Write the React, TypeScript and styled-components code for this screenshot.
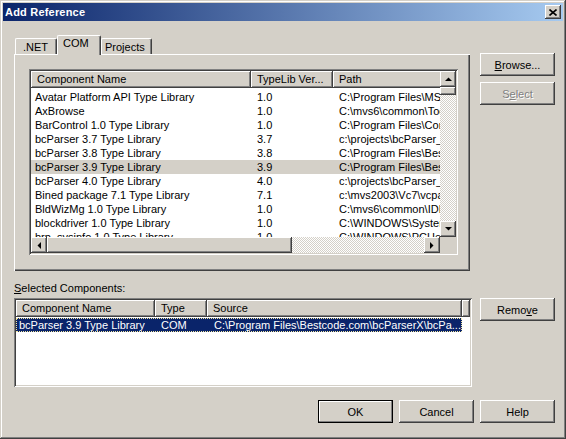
import React from "react";
import styled, { createGlobalStyle, css } from "styled-components";

const face = "#d4d0c8";
const light = "#ffffff";
const shadow = "#808080";
const dark = "#404040";

const GlobalStyle = createGlobalStyle`
  body {
    margin: 0;
    background: ${face};
  }
`;

const raised = css`
  box-shadow: inset -1px -1px ${dark}, inset 1px 1px ${light},
    inset -2px -2px ${shadow}, inset 2px 2px ${face};
`;

const sunken = css`
  box-shadow: inset 1px 1px ${shadow}, inset -1px -1px ${light},
    inset 2px 2px ${dark}, inset -2px -2px ${face};
`;

const checker = css`
  background: repeating-conic-gradient(${face} 0% 25%, ${light} 0% 50%) 0 0 / 2px 2px;
`;

const Window = styled.div`
  width: 566px;
  height: 439px;
  box-sizing: border-box;
  padding: 3px;
  background: ${face};
  box-shadow: inset -1px -1px ${dark}, inset 1px 1px ${face},
    inset -2px -2px ${shadow}, inset 2px 2px ${light};
  display: flex;
  flex-direction: column;
  font-family: "Liberation Sans", Arial, sans-serif;
  font-size: 11px;
  color: #000;
`;

const TitleBar = styled.div`
  height: 18px;
  display: flex;
  align-items: center;
  justify-content: space-between;
  padding: 0 2px;
  background: linear-gradient(to right, #0a246a, #a6caf0);
`;

const Title = styled.span`
  color: #fff;
  font-weight: bold;
  font-size: 11px;
  letter-spacing: 0.2px;
`;

const CloseButton = styled.div`
  width: 16px;
  height: 14px;
  background: ${face};
  ${raised};
  display: flex;
  align-items: center;
  justify-content: center;
`;

const Body = styled.div`
  flex: 1;
  display: flex;
  flex-direction: column;
  padding: 13px 8px 0 11px;
`;

const TopSection = styled.div`
  display: flex;
  gap: 10px;
`;

const TabArea = styled.div`
  width: 456px;
  display: flex;
  flex-direction: column;
`;

const TabStrip = styled.div`
  height: 20px;
  display: flex;
  align-items: flex-end;
  padding-left: 1px;
`;

const Tab = styled.div<{ $active?: boolean; $w: number; $pad: number }>`
  width: ${(p) => p.$w}px;
  height: ${(p) => (p.$active ? 20 : 16)}px;
  box-sizing: border-box;
  padding-left: ${(p) => p.$pad}px;
  padding-top: ${(p) => (p.$active ? 1 : 2)}px;
  line-height: 12px;
  background: ${face};
  border-top: 1px solid ${light};
  border-left: 1px solid ${light};
  border-right: 1px solid ${dark};
  border-radius: 2px 2px 0 0;
  box-shadow: inset -1px 0 ${shadow};
  position: relative;
  z-index: ${(p) => (p.$active ? 1 : 0)};
  margin-bottom: ${(p) => (p.$active ? -1 : 0)}px;
`;

const Panel = styled.div`
  height: 217px;
  box-sizing: border-box;
  padding: 15px 12px 16px 15px;
  box-shadow: inset 1px 1px ${light}, inset -1px -1px ${dark},
    inset -2px -2px ${shadow};
`;

const ButtonColumn = styled.div`
  display: flex;
  flex-direction: column;
  gap: 6px;
  padding-top: 19px;
`;

const Button = styled.button<{ $default?: boolean }>`
  width: 75px;
  height: 23px;
  padding: 0;
  border: none;
  background: ${face};
  font: inherit;
  color: ${(p) => (p.disabled ? shadow : "#000")};
  text-shadow: ${(p) => (p.disabled ? `1px 1px ${light}` : "none")};
  display: flex;
  align-items: center;
  justify-content: center;
  ${(p) =>
    p.$default
      ? css`
          box-shadow: inset 0 0 0 1px #000, inset -2px -2px ${shadow},
            inset 2px 2px ${light};
        `
      : raised};
`;

const ListView = styled.div<{ $w: number; $h: number }>`
  width: ${(p) => p.$w}px;
  height: ${(p) => p.$h}px;
  box-sizing: border-box;
  padding: 2px;
  background: #fff;
  ${sunken};
`;

const ScrollGrid = styled.div`
  width: 100%;
  height: 100%;
  display: grid;
  grid-template-columns: 1fr 16px;
  grid-template-rows: 1fr 16px;
`;

const Viewport = styled.div`
  overflow: hidden;
  min-width: 0;
`;

const HeaderRow = styled.div`
  display: flex;
  height: 17px;
  white-space: nowrap;
`;

const HeaderCell = styled.div<{ $w: number }>`
  flex: 0 0 ${(p) => p.$w}px;
  box-sizing: border-box;
  padding-left: 6px;
  line-height: 17px;
  background: ${face};
  overflow: hidden;
  ${raised};
`;

const Rows = styled.div<{ $top: number }>`
  padding-top: ${(p) => p.$top}px;
`;

const Row = styled.div<{ $sel?: "inactive" | "active" }>`
  display: flex;
  height: 14px;
  line-height: 14px;
  white-space: nowrap;
  width: max-content;
  background: ${(p) =>
    p.$sel === "active" ? "#0a246a" : p.$sel === "inactive" ? face : "transparent"};
  color: ${(p) => (p.$sel === "active" ? "#fff" : "#000")};
  outline: ${(p) => (p.$sel === "active" ? "1px dotted #f3e6a0" : "none")};
  outline-offset: -1px;
`;

const Cell = styled.div<{ $w: number; $pad: number }>`
  flex: 0 0 ${(p) => p.$w}px;
  box-sizing: border-box;
  padding-left: ${(p) => p.$pad}px;
  overflow: hidden;
`;

const VScroll = styled.div`
  display: flex;
  flex-direction: column;
`;

const HScroll = styled.div`
  display: flex;
`;

const ArrowButton = styled.div`
  flex: 0 0 16px;
  width: 16px;
  height: 16px;
  background: ${face};
  ${raised};
  display: flex;
  align-items: center;
  justify-content: center;
`;

const Thumb = styled.div<{ $size: number }>`
  flex: 0 0 ${(p) => p.$size}px;
  background: ${face};
  ${raised};
`;

const Trough = styled.div`
  flex: 1;
  ${checker};
`;

const Corner = styled.div`
  background: ${face};
`;

const SectionLabel = styled.div`
  margin-top: 10px;
  height: 14px;
  line-height: 14px;
`;

const SelectedRow = styled.div`
  display: flex;
  gap: 8px;
  margin-top: 3px;
`;

const BottomRow = styled.div`
  display: flex;
  justify-content: flex-end;
  gap: 6px;
  margin-top: 13px;
`;

type Dir = "up" | "down" | "left" | "right";

const Arrow = ({ dir }: { dir: Dir }) => {
  const pts: Record<Dir, string> = {
    up: "0,4 7,4 3.5,0.5",
    down: "0,0 7,0 3.5,3.5",
    left: "4,0 4,7 0.5,3.5",
    right: "0,0 0,7 3.5,3.5",
  };
  const vertical = dir === "up" || dir === "down";
  return (
    <svg width={vertical ? 7 : 4} height={vertical ? 4 : 7}>
      <polygon points={pts[dir]} fill="#000" />
    </svg>
  );
};

const comColumns = [
  { title: "Component Name", w: 220, pad: 4 },
  { title: "TypeLib Ver...", w: 82, pad: 6 },
  { title: "Path", w: 240, pad: 6 },
];

const comRows = [
  ["Avatar Platform API Type Library", "1.0", "C:\\Program Files\\MSN Messenger\\avatar.dll"],
  ["AxBrowse", "1.0", "C:\\mvs6\\common\\Tools\\axbrowse.tlb"],
  ["BarControl 1.0 Type Library", "1.0", "C:\\Program Files\\Common Files\\bar.ocx"],
  ["bcParser 3.7 Type Library", "3.7", "c:\\projects\\bcParser_37\\bcParser.dll"],
  ["bcParser 3.8 Type Library", "3.8", "C:\\Program Files\\Bestcode.com\\bcParser.dll"],
  ["bcParser 3.9 Type Library", "3.9", "C:\\Program Files\\Bestcode.com\\bcParserX.dll"],
  ["bcParser 4.0 Type Library", "4.0", "c:\\projects\\bcParser_40\\bcParser.dll"],
  ["Bined package 7.1 Type Library", "7.1", "c:\\mvs2003\\Vc7\\vcpackages\\bined.dll"],
  ["BldWizMg 1.0 Type Library", "1.0", "C:\\mvs6\\common\\IDE\\bldwizmg.dll"],
  ["blockdriver 1.0 Type Library", "1.0", "C:\\WINDOWS\\System32\\blockdriver.dll"],
  ["brp_sysinfo 1.0 Type Library", "1.0", "C:\\WINDOWS\\PCHealth\\brp_sysinfo.dll"],
];

const selColumns = [
  { title: "Component Name", w: 139, pad: 3 },
  { title: "Type", w: 52, pad: 6 },
  { title: "Source", w: 255, pad: 7 },
  { title: "", w: 8, pad: 0 },
];

const App = () => {
  return (
    <>
      <GlobalStyle />
      <Window>
        <TitleBar>
          <Title>Add Reference</Title>
          <CloseButton>
            <svg width="8" height="7" viewBox="0 0 8 7">
              <path d="M0.5 0.5L7.5 6.5M7.5 0.5L0.5 6.5" stroke="#000" strokeWidth="1.6" />
            </svg>
          </CloseButton>
        </TitleBar>
        <Body>
          <TopSection>
            <TabArea>
              <TabStrip>
                <Tab $w={42} $pad={7}>.NET</Tab>
                <Tab $w={44} $pad={5} $active>
                  COM
                </Tab>
                <Tab $w={51} $pad={3}>Projects</Tab>
              </TabStrip>
              <Panel>
                <ListView $w={429} $h={186}>
                  <ScrollGrid>
                    <Viewport>
                      <HeaderRow>
                        {comColumns.map((c) => (
                          <HeaderCell key={c.title} $w={c.w}>
                            {c.title}
                          </HeaderCell>
                        ))}
                      </HeaderRow>
                      <Rows $top={2}>
                        {comRows.map((r, i) => (
                          <Row key={r[0]} $sel={i === 5 ? "inactive" : undefined}>
                            {r.map((v, j) => (
                              <Cell key={j} $w={comColumns[j].w} $pad={comColumns[j].pad}>
                                {v}
                              </Cell>
                            ))}
                          </Row>
                        ))}
                      </Rows>
                    </Viewport>
                    <VScroll>
                      <ArrowButton>
                        <Arrow dir="up" />
                      </ArrowButton>
                      <Thumb $size={8} />
                      <Trough />
                      <ArrowButton>
                        <Arrow dir="down" />
                      </ArrowButton>
                    </VScroll>
                    <HScroll>
                      <ArrowButton>
                        <Arrow dir="left" />
                      </ArrowButton>
                      <Thumb $size={245} />
                      <Trough />
                      <ArrowButton>
                        <Arrow dir="right" />
                      </ArrowButton>
                    </HScroll>
                    <Corner />
                  </ScrollGrid>
                </ListView>
              </Panel>
            </TabArea>
            <ButtonColumn>
              <Button>
                <u>B</u>rowse...
              </Button>
              <Button disabled>
                S<u>e</u>lect
              </Button>
            </ButtonColumn>
          </TopSection>

          <SectionLabel>
            <u>S</u>elected Components:
          </SectionLabel>
          <SelectedRow>
            <ListView $w={458} $h={89}>
              <HeaderRow>
                {selColumns.map((c, i) => (
                  <HeaderCell key={i} $w={c.w}>
                    {c.title}
                  </HeaderCell>
                ))}
              </HeaderRow>
              <Rows $top={1}>
                <Row $sel="active">
                  <Cell $w={139} $pad={3}>bcParser 3.9 Type Library</Cell>
                  <Cell $w={52} $pad={6}>COM</Cell>
                  <Cell $w={255} $pad={7}>
                    C:\Program Files\Bestcode.com\bcParserX\bcPa...
                  </Cell>
                </Row>
              </Rows>
            </ListView>
            <Button>
              Remo<u>v</u>e
            </Button>
          </SelectedRow>

          <BottomRow>
            <Button $default>OK</Button>
            <Button>Cancel</Button>
            <Button>Help</Button>
          </BottomRow>
        </Body>
      </Window>
    </>
  );
};

export default App;
